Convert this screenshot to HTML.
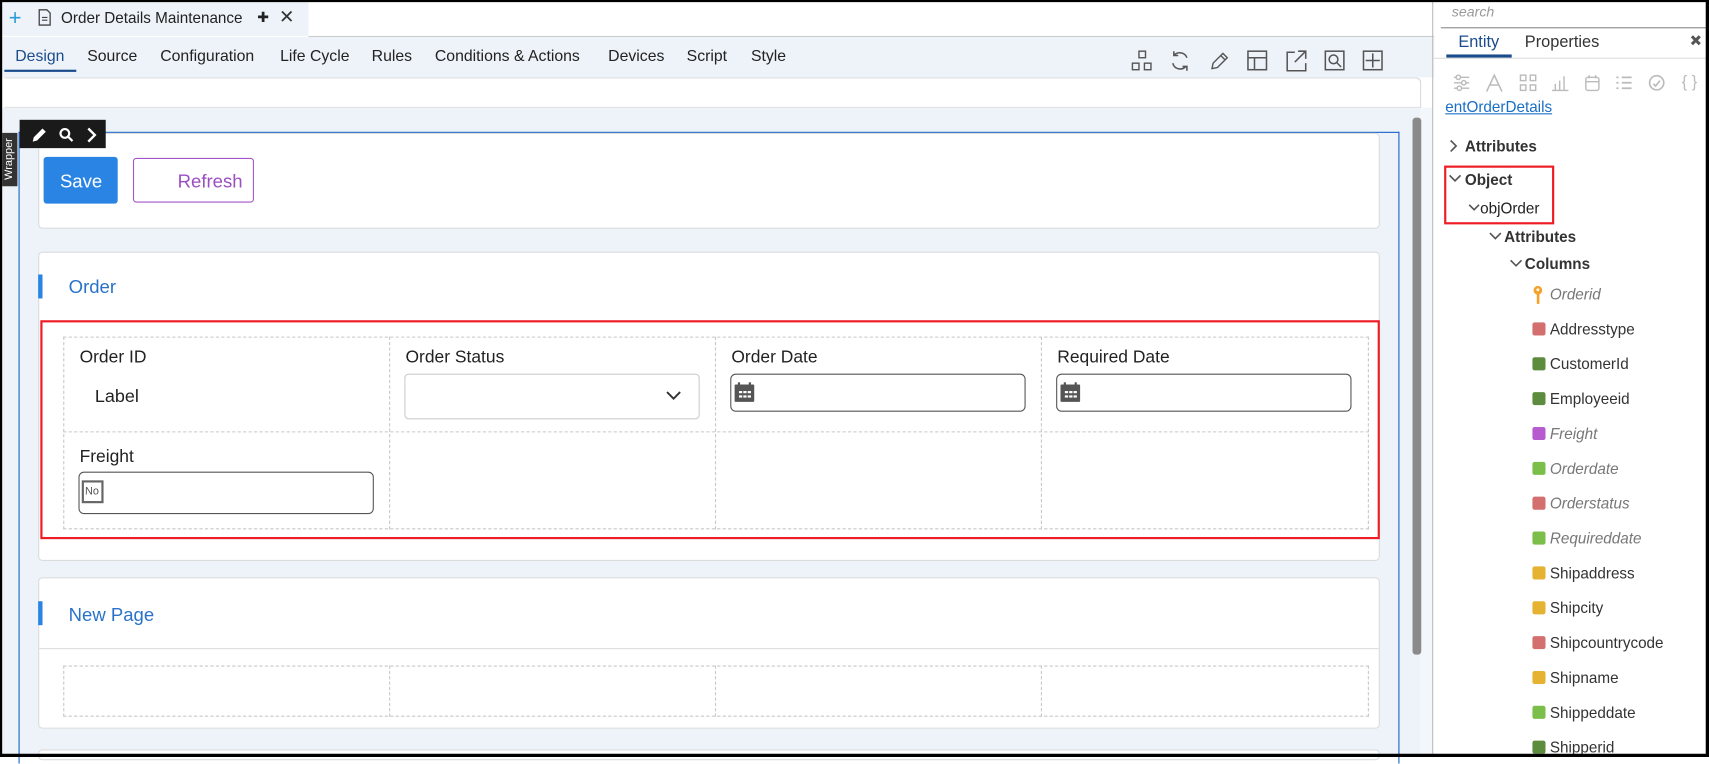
<!DOCTYPE html>
<html><head><meta charset="utf-8">
<style>
*{box-sizing:border-box;margin:0;padding:0}
html,body{width:1709px;height:757px;overflow:hidden;background:#fff}
#s{position:absolute;left:0;top:0;width:1568px;height:695px;transform:scale(1.08992,1.08921);transform-origin:0 0;font-family:"Liberation Sans",sans-serif;color:#222;background:#fff}
.a{position:absolute}
.t{position:absolute;white-space:nowrap;line-height:1}
.dash{border:1px dashed #c8c8c8}
.sq{position:absolute;width:12px;height:12px;border-radius:2px;left:1406px}
.it{position:absolute;left:1422px;font-size:14px;color:#333;white-space:nowrap;line-height:1}
.it.i{font-style:italic;color:#777}
svg{position:absolute;overflow:visible}
</style></head><body><div id="s">
<!-- tab bar -->
<div class="a" style="left:0;top:0;width:283px;height:33px;background:#eef3f9"></div>
<div class="a" style="left:283px;top:33px;width:1033px;height:1px;background:#ccc"></div>
<div class="t" style="left:8px;top:7px;font-size:20px;color:#2a9bd8">+</div>
<svg style="left:35px;top:8px" width="12" height="16"><path d="M1 1h7l3 3v11H1z" fill="none" stroke="#444" stroke-width="1.2"/><path d="M3.5 8h5M3.5 10.5h5" stroke="#444"/></svg>
<div class="t" style="left:56px;top:9px;font-size:14px;color:#222">Order Details Maintenance</div>
<div class="t" style="left:236px;top:9px;font-size:13px;color:#222">✚</div>
<div class="t" style="left:256px;top:7px;font-size:17px;color:#333">✕</div>
<!-- menu -->
<div class="a" style="left:0;top:34px;width:1316px;height:37px;background:#eef3f9"></div>
<div class="t" style="left:14px;top:45px;font-size:14.5px;color:#1a4c8c">Design</div>
<div class="a" style="left:4px;top:64px;width:66px;height:2px;background:#1a4c8c"></div>
<div class="t" style="left:80px;top:45px;font-size:14.5px">Source</div>
<div class="t" style="left:147px;top:45px;font-size:14.5px">Configuration</div>
<div class="t" style="left:257px;top:45px;font-size:14.5px">Life Cycle</div>
<div class="t" style="left:341px;top:45px;font-size:14.5px">Rules</div>
<div class="t" style="left:399px;top:45px;font-size:14.5px">Conditions &amp; Actions</div>
<div class="t" style="left:558px;top:45px;font-size:14.5px">Devices</div>
<div class="t" style="left:630px;top:45px;font-size:14.5px">Script</div>
<div class="t" style="left:689px;top:45px;font-size:14.5px">Style</div>
<!-- toolbar icons -->
<svg style="left:1038px;top:46px" width="20" height="20" fill="none" stroke="#555" stroke-width="1.3"><rect x="7" y="1" width="6" height="6"/><rect x="1" y="12" width="6" height="6"/><rect x="12" y="12" width="6" height="6"/></svg>
<svg style="left:1073px;top:46px" width="20" height="20" fill="none" stroke="#555" stroke-width="1.4"><path d="M16 7A7 7 0 0 0 4 5M4 1v4h4M3 12a7 7 0 0 0 12 3M16 19v-4h-4"/></svg>
<svg style="left:1109px;top:46px" width="20" height="20" fill="none" stroke="#555" stroke-width="1.3"><path d="M3 17l1-5L13 3l4 4-9 9z M11 5l4 4"/></svg>
<svg style="left:1144px;top:46px" width="20" height="20" fill="none" stroke="#555" stroke-width="1.4"><rect x="1" y="1" width="17" height="17"/><path d="M1 7h17M7 7v11"/></svg>
<svg style="left:1180px;top:46px" width="20" height="20" fill="none" stroke="#555" stroke-width="1.4"><path d="M8 2H1v17h17v-7M11 1h7v7M18 1L8 11"/></svg>
<svg style="left:1215px;top:46px" width="20" height="20" fill="none" stroke="#555" stroke-width="1.4"><rect x="1" y="1" width="17" height="17"/><circle cx="8.5" cy="8.5" r="4"/><path d="M11.5 11.5l4 4"/></svg>
<svg style="left:1250px;top:46px" width="20" height="20" fill="none" stroke="#555" stroke-width="1.4"><rect x="1" y="1" width="17" height="17"/><path d="M9.5 3v13M3 9.5h13"/></svg>
<!-- white strip -->
<div class="a" style="left:4px;top:71px;width:1300px;height:28px;background:#fff;border:1px solid #d6d6d6;border-left:none;border-radius:0 5px 0 0"></div>
<!-- canvas -->
<div class="a" style="left:2px;top:99px;width:1312px;height:596px;background:#edf3f8"></div>
<div class="a" style="left:1303px;top:99px;width:12px;height:596px;background:#f3f6fb"></div>
<div class="a" style="left:1296px;top:108px;width:8px;height:493px;background:#8a8a8a;border-radius:3px"></div>
<div class="a" style="left:1314px;top:0;width:1px;height:695px;background:#bbb"></div>
<!-- wrapper -->
<div class="a" style="left:17px;top:121px;width:1267px;height:580px;border:1px solid #1560c8;border-bottom:none"></div>
<!-- card 1 -->
<div class="a" style="left:35px;top:122px;width:1231px;height:88px;background:#fff;border:1px solid #dcdcdc;border-radius:4px"></div>
<div class="a" style="left:40px;top:144px;width:68px;height:43px;background:#2a84e4;border-radius:3px"></div>
<div class="t" style="left:55px;top:158px;font-size:17px;color:#fff">Save</div>
<div class="a" style="left:122px;top:145px;width:111px;height:41px;border:1px solid #a455c9;border-radius:3px"></div>
<div class="t" style="left:163px;top:158px;font-size:17px;color:#9b4fc0">Refresh</div>
<!-- wrapper toolbar (on top) -->
<div class="a" style="left:18px;top:110px;width:79px;height:26px;background:#1a1a1a"></div>
<svg style="left:28px;top:116px" width="16" height="16"><path d="M2 14l1-4 8-8 3 3-8 8z" fill="#fff"/></svg>
<svg style="left:53px;top:116px" width="16" height="16" fill="none" stroke="#fff" stroke-width="2"><circle cx="6.5" cy="6.5" r="4"/><path d="M9.5 9.5l4 4"/></svg>
<svg style="left:78px;top:116px" width="12" height="16" fill="none" stroke="#fff" stroke-width="2.2"><path d="M3 2l6 6-6 6"/></svg>
<div class="a" style="left:2px;top:122px;width:14px;height:49px;background:#333"></div>
<div class="t" style="left:9px;top:146px;font-size:10px;color:#fff;transform:translate(-50%,-50%) rotate(-90deg)">Wrapper</div>
<!-- card 2 -->
<div class="a" style="left:35px;top:231px;width:1231px;height:284px;background:#fff;border:1px solid #dcdcdc;border-radius:4px"></div>
<div class="a" style="left:35px;top:252px;width:4px;height:22px;background:#2a84e4"></div>
<div class="t" style="left:63px;top:255px;font-size:17px;color:#2a72c9">Order</div>
<div class="a" style="left:37px;top:294px;width:1229px;height:201px;border:2px solid #ee1c25"></div>
<div class="a dash" style="left:58px;top:309px;width:1198px;height:177px"></div>
<div class="a" style="left:58px;top:396px;width:1198px;border-top:1px dashed #c8c8c8"></div>
<div class="a" style="left:357px;top:309px;height:177px;border-left:1px dashed #c8c8c8"></div>
<div class="a" style="left:656px;top:309px;height:177px;border-left:1px dashed #c8c8c8"></div>
<div class="a" style="left:955px;top:309px;height:177px;border-left:1px dashed #c8c8c8"></div>
<div class="t" style="left:73px;top:321px;font-size:16px">Order ID</div>
<div class="t" style="left:87px;top:356px;font-size:16.5px">Label</div>
<div class="t" style="left:372px;top:321px;font-size:16px">Order Status</div>
<div class="a" style="left:371px;top:343px;width:271px;height:42px;border:1px solid #ccc;border-radius:4px"></div>
<svg style="left:611px;top:359px" width="14" height="9" fill="none" stroke="#333" stroke-width="1.8"><path d="M1 1l6 6 6-6"/></svg>
<div class="t" style="left:671px;top:321px;font-size:16px">Order Date</div>
<div class="a" style="left:670px;top:343px;width:271px;height:35px;border:1px solid #555;border-radius:5px"></div>
<div class="t" style="left:970px;top:321px;font-size:16px">Required Date</div>
<div class="a" style="left:969px;top:343px;width:271px;height:35px;border:1px solid #555;border-radius:5px"></div>
<svg style="left:673px;top:350px" width="20" height="20"><rect x="1" y="3" width="18" height="16" rx="1" fill="#555"/><rect x="4" y="1" width="2" height="4" fill="#555"/><rect x="14" y="1" width="2" height="4" fill="#555"/><g fill="#fff"><rect x="5" y="9" width="3" height="2"/><rect x="9" y="9" width="3" height="2"/><rect x="13" y="9" width="3" height="2"/><rect x="5" y="13" width="3" height="2"/><rect x="9" y="13" width="3" height="2"/><rect x="13" y="13" width="3" height="2"/></g></svg>
<svg style="left:972px;top:350px" width="20" height="20"><rect x="1" y="3" width="18" height="16" rx="1" fill="#555"/><rect x="4" y="1" width="2" height="4" fill="#555"/><rect x="14" y="1" width="2" height="4" fill="#555"/><g fill="#fff"><rect x="5" y="9" width="3" height="2"/><rect x="9" y="9" width="3" height="2"/><rect x="13" y="9" width="3" height="2"/><rect x="5" y="13" width="3" height="2"/><rect x="9" y="13" width="3" height="2"/><rect x="13" y="13" width="3" height="2"/></g></svg>
<div class="t" style="left:73px;top:412px;font-size:16px">Freight</div>
<div class="a" style="left:72px;top:433px;width:271px;height:39px;border:1px solid #555;border-radius:5px"></div>
<div class="a" style="left:75px;top:441px;width:20px;height:21px;border:2px solid #666;background:#fff"></div>
<div class="t" style="left:78px;top:447px;font-size:10px;color:#555">No</div>
<!-- card 3 -->
<div class="a" style="left:35px;top:530px;width:1231px;height:139px;background:#fff;border:1px solid #dcdcdc;border-radius:4px"></div>
<div class="a" style="left:35px;top:552px;width:4px;height:22px;background:#2a84e4"></div>
<div class="t" style="left:63px;top:556px;font-size:17px;color:#2a72c9">New Page</div>
<div class="a" style="left:36px;top:595px;width:1229px;height:1px;background:#ddd"></div>
<div class="a dash" style="left:58px;top:611px;width:1198px;height:47px"></div>
<div class="a" style="left:357px;top:611px;height:47px;border-left:1px dashed #c8c8c8"></div>
<div class="a" style="left:656px;top:611px;height:47px;border-left:1px dashed #c8c8c8"></div>
<div class="a" style="left:955px;top:611px;height:47px;border-left:1px dashed #c8c8c8"></div>
<div class="a" style="left:35px;top:688px;width:1231px;height:10px;background:#fff;border:1px solid #dcdcdc;border-radius:4px"></div>
<!-- right panel -->
<div class="t" style="left:1332px;top:4px;font-size:13px;font-style:italic;color:#999">search</div>
<div class="a" style="left:1322px;top:25px;width:246px;height:1px;background:#888"></div>
<div class="t" style="left:1338px;top:31px;font-size:15px;color:#1a4c8c">Entity</div>
<div class="t" style="left:1399px;top:31px;font-size:15px;color:#333">Properties</div>
<div class="a" style="left:1327px;top:50px;width:60px;height:3px;background:#1a4c8c"></div>
<div class="a" style="left:1315px;top:53px;width:253px;height:1px;background:#ddd"></div>
<div class="t" style="left:1550px;top:30px;font-size:14px;color:#555;transform:rotate(45deg)">✚</div>
<svg style="left:1333px;top:68px" width="16" height="16" fill="none" stroke="#bbb" stroke-width="1.3"><path d="M1 3h14M1 8h14M1 13h14"/><circle cx="5" cy="3" r="2" fill="#fff"/><circle cx="10" cy="8" r="2" fill="#fff"/><circle cx="6" cy="13" r="2" fill="#fff"/></svg>
<svg style="left:1363px;top:68px" width="16" height="16" fill="none" stroke="#bbb" stroke-width="1.4"><path d="M1 16L8 1l7 15M4 10h8"/></svg>
<svg style="left:1394px;top:68px" width="16" height="16" fill="none" stroke="#bbb" stroke-width="1.3"><rect x="1" y="1" width="5" height="5"/><rect x="10" y="1" width="5" height="5"/><rect x="1" y="10" width="5" height="5"/><rect x="10" y="10" width="5" height="5"/></svg>
<svg style="left:1423px;top:68px" width="16" height="16" fill="none" stroke="#bbb" stroke-width="1.3"><path d="M1 15h15M4 15V9M8 15V6M12 15V2"/></svg>
<svg style="left:1453px;top:68px" width="16" height="16" fill="none" stroke="#bbb" stroke-width="1.3"><rect x="2" y="3" width="12" height="12" rx="2"/><path d="M2 7h12M5 1v3M11 1v3"/></svg>
<svg style="left:1482px;top:68px" width="16" height="16" fill="none" stroke="#bbb" stroke-width="1.6"><path d="M1 3h2M6 3h9M1 8h2M6 8h9M1 13h2M6 13h9"/></svg>
<svg style="left:1512px;top:68px" width="16" height="16" fill="none" stroke="#bbb" stroke-width="1.5"><circle cx="8" cy="8" r="6.5"/><path d="M5 9l2 2 4-5"/></svg>
<div class="t" style="left:1543px;top:68px;font-size:15px;color:#bbb">{ }</div>
<div class="t" style="left:1326px;top:91px;font-size:14px;color:#1a6fc4;text-decoration:underline">entOrderDetails</div>
<svg style="left:1330px;top:128px" width="8" height="12" fill="none" stroke="#555" stroke-width="1.5"><path d="M1 1l5 5-5 5"/></svg>
<div class="t" style="left:1344px;top:127px;font-size:14px;color:#333;font-weight:bold">Attributes</div>
<div class="a" style="left:1325px;top:152px;width:101px;height:54px;border:2px solid #ee1c25"></div>
<svg style="left:1329px;top:160px" width="12" height="8" fill="none" stroke="#555" stroke-width="1.5"><path d="M1 1l5 5 5-5"/></svg>
<div class="t" style="left:1344px;top:158px;font-size:14px;color:#333;font-weight:bold">Object</div>
<svg style="left:1347px;top:187px" width="11" height="7" fill="none" stroke="#555" stroke-width="1.5"><path d="M1 1l4.5 4.5L10 1"/></svg>
<div class="t" style="left:1358px;top:184px;font-size:14px;color:#222">objOrder</div>
<svg style="left:1366px;top:213px" width="12" height="8" fill="none" stroke="#555" stroke-width="1.5"><path d="M1 1l5 5 5-5"/></svg>
<div class="t" style="left:1380px;top:210px;font-size:14px;color:#333;font-weight:bold">Attributes</div>
<svg style="left:1385px;top:238px" width="12" height="8" fill="none" stroke="#555" stroke-width="1.5"><path d="M1 1l5 5 5-5"/></svg>
<div class="t" style="left:1399px;top:235px;font-size:14px;color:#333;font-weight:bold">Columns</div>
<svg style="left:1406px;top:262px" width="12" height="18"><circle cx="5" cy="4.5" r="4" fill="#f4a32a"/><rect x="4" y="7" width="2.4" height="10" fill="#f4a32a"/><circle cx="5" cy="4" r="1.3" fill="#fff"/></svg>
<div class="it i" style="top:263px">Orderid</div>
<div class="sq" style="top:296px;background:#d46f6f"></div><div class="it" style="top:295px">Addresstype</div>
<div class="sq" style="top:328px;background:#5e8c3e"></div><div class="it" style="top:327px">CustomerId</div>
<div class="sq" style="top:360px;background:#5e8c3e"></div><div class="it" style="top:359px">Employeeid</div>
<div class="sq" style="top:392px;background:#b65ccf"></div><div class="it i" style="top:391px">Freight</div>
<div class="sq" style="top:424px;background:#7bbf4a"></div><div class="it i" style="top:423px">Orderdate</div>
<div class="sq" style="top:456px;background:#d46f6f"></div><div class="it i" style="top:455px">Orderstatus</div>
<div class="sq" style="top:488px;background:#7bbf4a"></div><div class="it i" style="top:487px">Requireddate</div>
<div class="sq" style="top:520px;background:#e5b232"></div><div class="it" style="top:519px">Shipaddress</div>
<div class="sq" style="top:552px;background:#e5b232"></div><div class="it" style="top:551px">Shipcity</div>
<div class="sq" style="top:584px;background:#d46f6f"></div><div class="it" style="top:583px">Shipcountrycode</div>
<div class="sq" style="top:616px;background:#e5b232"></div><div class="it" style="top:615px">Shipname</div>
<div class="sq" style="top:648px;background:#7bbf4a"></div><div class="it" style="top:647px">Shippeddate</div>
<div class="sq" style="top:680px;background:#5e8c3e"></div><div class="it" style="top:679px">Shipperid</div>
<!-- outer black border -->
<div class="a" style="left:0;top:0;width:1568px;height:695px;border:2px solid #000;border-right-width:3px;border-bottom-width:3px"></div>
</div></body></html>
